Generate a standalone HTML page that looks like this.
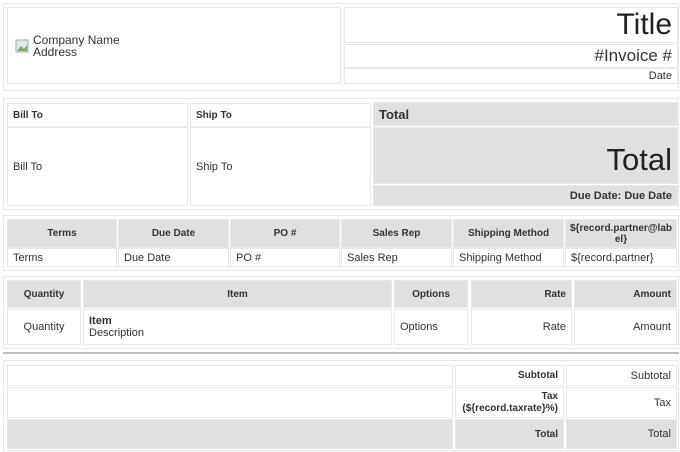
<!DOCTYPE html><html><head><style>
body{margin:0;width:680px;height:452px;background:#fff;font-family:"Liberation Sans",Arial,sans-serif;color:#333;position:relative;overflow:hidden}
.b{position:absolute;border:1px solid #e3e8ee;box-sizing:border-box}
.c{position:absolute;border:1px solid #e6e9ec;box-sizing:border-box;font-size:11px;display:flex;align-items:center;padding:0 5px}
.g{background:#e0e0e0}
.h{font-weight:bold;font-size:10px;justify-content:center}
.r{justify-content:flex-end}
.m{justify-content:center}
</style></head><body>
<div class="b" style="left:3px;top:3px;width:676px;height:88px"></div>
<div class="c" style="left:7px;top:7px;width:334px;height:77px;font-size:12px;line-height:12px">
<svg width="14" height="14" style="margin:0 4px 0 2px"><rect x="1" y="1" width="12" height="12" fill="#dfe7ee" stroke="#9ab"/><path d="M2 12 L6 7 L9 10 L12 6 L12 12Z" fill="#7a5"/></svg><div>Company Name<br>Address</div></div>
<div class="c r" style="left:344px;top:7px;width:334px;height:36px;font-size:30px;color:#222">Title</div>
<div class="c r" style="left:344px;top:44px;width:334px;height:24px;font-size:17px">#Invoice #</div>
<div class="c r" style="left:344px;top:68px;width:334px;height:16px;font-size:11px">Date</div>

<div class="b" style="left:3px;top:98px;width:676px;height:112px"></div>
<div class="c" style="left:7px;top:103px;width:181px;height:24px;font-weight:bold;font-size:10px">Bill To</div>
<div class="c" style="left:190px;top:103px;width:181px;height:24px;font-weight:bold;font-size:10px">Ship To</div>
<div class="c" style="left:7px;top:127px;width:181px;height:79px">Bill To</div>
<div class="c" style="left:190px;top:127px;width:181px;height:79px">Ship To</div>
<div class="c g" style="left:373px;top:102px;width:305px;height:24px;font-weight:bold;font-size:13px">Total</div>
<div class="c g r" style="left:373px;top:127px;width:305px;height:57px;font-size:31px;color:#222;padding-top:8px">Total</div>
<div class="c g r" style="left:373px;top:185px;width:305px;height:21px;font-weight:bold;font-size:11px">Due Date: Due Date</div>

<div class="b" style="left:3px;top:215px;width:676px;height:56px"></div>
<div class="c g h" style="left:7px;top:219px;width:110px;height:29px">Terms</div>
<div class="c g h" style="left:118px;top:219px;width:111px;height:29px">Due Date</div>
<div class="c g h" style="left:230px;top:219px;width:110px;height:29px">PO #</div>
<div class="c g h" style="left:341px;top:219px;width:111px;height:29px">Sales Rep</div>
<div class="c g h" style="left:453px;top:219px;width:111px;height:29px">Shipping Method</div>
<div class="c g h" style="left:565px;top:219px;width:112px;height:29px;text-align:center;line-height:11px;word-break:break-all;padding:0 3px">${record.partner@label}</div>
<div class="c" style="left:7px;top:248px;width:110px;height:19px">Terms</div>
<div class="c" style="left:118px;top:248px;width:111px;height:19px">Due Date</div>
<div class="c" style="left:230px;top:248px;width:110px;height:19px">PO #</div>
<div class="c" style="left:341px;top:248px;width:111px;height:19px">Sales Rep</div>
<div class="c" style="left:453px;top:248px;width:111px;height:19px">Shipping Method</div>
<div class="c" style="left:565px;top:248px;width:112px;height:19px">${record.partner}</div>

<div class="b" style="left:3px;top:276px;width:676px;height:73px"></div>
<div class="c g h" style="left:7px;top:280px;width:74px;height:28px">Quantity</div>
<div class="c g h" style="left:83px;top:280px;width:309px;height:28px">Item</div>
<div class="c g h" style="left:394px;top:280px;width:74px;height:28px">Options</div>
<div class="c g h r" style="left:471px;top:280px;width:101px;height:28px">Rate</div>
<div class="c g h r" style="left:574px;top:280px;width:103px;height:28px">Amount</div>
<div class="c m" style="left:7px;top:309px;width:74px;height:36px">Quantity</div>
<div class="c" style="left:83px;top:309px;width:309px;height:36px;line-height:12px"><div><b>Item</b><br>Description</div></div>
<div class="c" style="left:394px;top:309px;width:74px;height:36px">Options</div>
<div class="c r" style="left:471px;top:309px;width:101px;height:36px">Rate</div>
<div class="c r" style="left:574px;top:309px;width:103px;height:36px">Amount</div>

<div style="position:absolute;left:3px;top:352px;width:676px;height:2px;background:#bfbfbf"></div>

<div class="b" style="left:3px;top:360px;width:676px;height:91px"></div>
<div class="c" style="left:7px;top:365px;width:446px;height:21px"></div>
<div class="c r" style="left:455px;top:365px;width:109px;height:21px;font-weight:bold;font-size:10px">Subtotal</div>
<div class="c r" style="left:566px;top:365px;width:111px;height:21px">Subtotal</div>
<div class="c" style="left:7px;top:387px;width:446px;height:31px"></div>
<div class="c r" style="left:455px;top:387px;width:109px;height:31px;font-weight:bold;font-size:10px;text-align:right;line-height:12px">Tax<br>(${record.taxrate}%)</div>
<div class="c r" style="left:566px;top:387px;width:111px;height:31px">Tax</div>
<div class="c g" style="left:7px;top:419px;width:446px;height:30px"></div>
<div class="c g r" style="left:455px;top:419px;width:109px;height:30px;font-weight:bold;font-size:10px">Total</div>
<div class="c g r" style="left:566px;top:419px;width:111px;height:30px">Total</div>
</body></html>
